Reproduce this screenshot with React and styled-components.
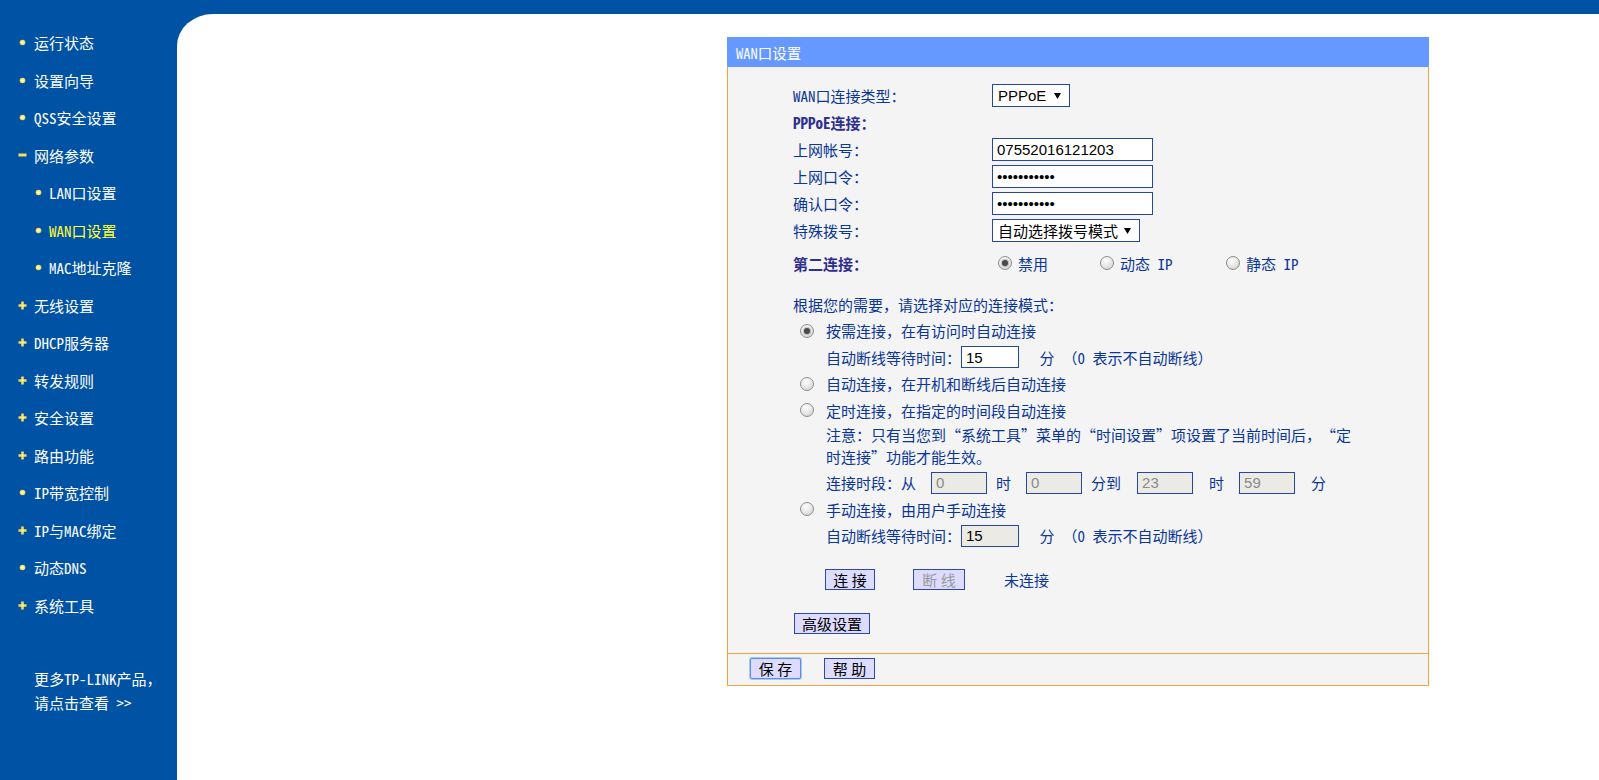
import React from 'react'
import styled, { createGlobalStyle } from 'styled-components'

const GlobalStyle = createGlobalStyle`
html,body{margin:0;padding:0;height:100%;}
body{
  font-family:"Noto Sans Mono CJK SC","Noto Sans CJK SC",sans-serif;
  background:#0052a4;
}
#root{height:100%;}
`

const Page = styled.div`
display:flex;
height:100vh;
background:#0052a4;
overflow:hidden;
`
const Sidebar = styled.div`
width:177px;
flex-shrink:0;
padding-top:24px;
box-sizing:border-box;
`
const MenuItem = styled.div`
display:flex;
align-items:center;
height:37.5px;
padding-left:${p => p.$sub ? '33px' : '17px'};
font-size:15px;
color:${p => p.$active ? '#ffff3a' : '#ffffff'};
white-space:nowrap;
`
const Marker = styled.span`
width:11px;
display:flex;
justify-content:center;
align-items:center;
margin-right:${p => p.$sub ? '5px' : '6px'};
`
const MoreLink = styled.div`
margin:43px 0 0 34px;
color:#fff;
font-size:15px;
line-height:23.5px;
white-space:nowrap;
`

const Main = styled.div`
flex:1;
margin-top:14px;
background:#fff;
border-top-left-radius:36px 32px;
padding:23px 0 0 550px;
`
const Panel = styled.div`
width:702px;
`
const PanelHead = styled.div`
height:30px;
background:#6699ff;
color:#fff;
font-size:14.5px;
display:flex;
align-items:center;
padding-left:9px;
`
const PanelBody = styled.div`
background:#f4f4f4;
border:1px solid #f7a23c;
border-top:none;
`
const Content = styled.div`
padding:15px 0 19px 65px;
color:#0a3697;
font-size:15px;
`
const Row = styled.div`
display:flex;
align-items:center;
white-space:nowrap;
height:${p => p.$h || '26.5px'};
margin-top:${p => p.$mt || '0'};
padding-left:${p => p.$indent || '0'};
`
const Label = styled.span`
width:199px;
flex-shrink:0;
font-weight:${p => p.$strong ? 'bold' : 'normal'};
color:${p => p.$strong ? '#2f2f8f' : 'inherit'};
`
const Note = styled.div`
padding-left:33px;
line-height:22px;
margin-bottom:2px;
white-space:nowrap;
`
const Quote = styled.span`
display:inline-block;
width:1em;
text-align:${p => p.$close ? 'left' : 'right'};
`
const Unit = styled.span`
margin-left:${p => p.$ml || '0'};
`
const Field = styled.input`
box-sizing:border-box;
width:${p => p.$w || '161px'};
height:${p => p.$h || '23px'};
margin:0 0 0 ${p => p.$ml || '0'};
border:1px solid #2846a5;
border-radius:0;
background:${p => p.$gray ? '#ebeae5' : '#fff'};
color:${p => p.$dim ? '#8a8a8a' : '#000'};
font:15px "Liberation Sans",Arial,sans-serif;
padding:0 4px;
outline:none;
`
const SelectBox = styled.div`
box-sizing:border-box;
display:inline-flex;
align-items:center;
height:23px;
padding:0 8px 0 5px;
border:1px solid #2846a5;
background:#fff;
color:#000;
font:${p => p.$cjk ? '15px "Noto Sans CJK SC",sans-serif' : '15px "Liberation Sans",Arial,sans-serif'};
`
const Arrow = styled.svg`
margin-left:${p => p.$gap || '8px'};
`
const RadioOpt = styled.span`
display:inline-flex;
align-items:center;
width:${p => p.$w || 'auto'};
`
const RadioMark = styled.span`
box-sizing:border-box;
width:14px;
height:14px;
border-radius:50%;
border:1px solid #8e8e8e;
background:radial-gradient(circle at 40% 30%, #ffffff 0%, #ececec 40%, #cbcbcb 100%);
display:inline-flex;
align-items:center;
justify-content:center;
flex-shrink:0;
margin:${p => p.$m || '0 6px 0 0'};
&::after{
  content:'';
  width:6px;
  height:6px;
  border-radius:50%;
  background:#4a4a4a;
  box-shadow:0 0 0 1px rgba(100,100,100,0.35);
  display:${p => p.$on ? 'block' : 'none'};
}
`
const Btn = styled.button`
box-sizing:border-box;
width:${p => p.$w || '50px'};
height:21px;
margin-left:${p => p.$ml || '0'};
padding:0;
border:1px solid #2a48b0;
border-radius:0;
background:#dddcff;
color:${p => p.$off ? '#9a9a9a' : '#000'};
font:15px "Noto Sans CJK SC",sans-serif;
line-height:19px;
${p => p.$focus && 'border-color:#5b8fe6;box-shadow:0 0 0 1px #a9c8f4;border-radius:2px;'}
`
const ButtonRow = styled.div`
display:flex;
align-items:center;
margin-top:${p => p.$mt || '0'};
padding-left:${p => p.$indent || '0'};
height:21px;
`
const Status = styled.span`
margin-left:39px;
`
const Footer = styled.div`
border-top:1px solid #f7a23c;
height:32px;
padding:4px 0 0 22px;
box-sizing:border-box;
display:flex;
align-items:flex-start;
`

const Dot = () => (
  <svg width="7" height="7" viewBox="0 0 7 7">
    <circle cx="3.5" cy="3.5" r="2.8" fill="#f5df5a" />
    <circle cx="3.5" cy="3.5" r="1.3" fill="#fffbe2" />
  </svg>
)
const Plus = () => (
  <svg width="9" height="9" viewBox="0 0 9 9">
    <path d="M3.2 0.5h2.6v2.7h2.7v2.6H5.8v2.7H3.2V5.8H0.5V3.2h2.7z" fill="#f5df5a" />
    <rect x="3.8" y="3.8" width="1.4" height="1.4" fill="#fffbe2" />
  </svg>
)
const Minus = () => (
  <svg width="9" height="4" viewBox="0 0 9 4">
    <rect x="0.5" y="0.5" width="8" height="3" fill="#f5df5a" />
  </svg>
)
const Tri = ({ gap }) => (
  <Arrow $gap={gap} width="7" height="6" viewBox="0 0 7 6">
    <polygon points="0,0 7,0 3.5,6" fill="#000" />
  </Arrow>
)

const menu = [
  { t: '运行状态', m: 'dot' },
  { t: '设置向导', m: 'dot' },
  { t: 'QSS安全设置', m: 'dot' },
  { t: '网络参数', m: 'minus' },
  { t: 'LAN口设置', m: 'dot', sub: true },
  { t: 'WAN口设置', m: 'dot', sub: true, active: true },
  { t: 'MAC地址克隆', m: 'dot', sub: true },
  { t: '无线设置', m: 'plus' },
  { t: 'DHCP服务器', m: 'plus' },
  { t: '转发规则', m: 'plus' },
  { t: '安全设置', m: 'plus' },
  { t: '路由功能', m: 'plus' },
  { t: 'IP带宽控制', m: 'dot' },
  { t: 'IP与MAC绑定', m: 'plus' },
  { t: '动态DNS', m: 'dot' },
  { t: '系统工具', m: 'plus' },
]

const markers = { dot: Dot, plus: Plus, minus: Minus }

// fullwidth curly quotes, as the router's SimSun renders them
const Q = ({ children }) => (
  <>
    <Quote>“</Quote>{children}<Quote $close>”</Quote>
  </>
)

const App = () => {
  return (
    <Page>
      <GlobalStyle />
      <Sidebar>
        {menu.map(item => {
          const M = markers[item.m]
          return (
            <MenuItem key={item.t} $sub={item.sub} $active={item.active}>
              <Marker $sub={item.sub}><M /></Marker>
              {item.t}
            </MenuItem>
          )
        })}
        <MoreLink>
          更多TP-LINK产品，<br />
          请点击查看 &gt;&gt;
        </MoreLink>
      </Sidebar>

      <Main>
        <Panel>
          <PanelHead>WAN口设置</PanelHead>
          <PanelBody>
            <Content>
              <Row $h="27px">
                <Label>WAN口连接类型：</Label>
                <SelectBox>PPPoE<Tri /></SelectBox>
              </Row>
              <Row $h="27px"><Label $strong>PPPoE连接：</Label></Row>
              <Row $h="27px">
                <Label>上网帐号：</Label>
                <Field defaultValue="07552016121203" />
              </Row>
              <Row $h="27px">
                <Label>上网口令：</Label>
                <Field type="password" defaultValue="12345678901" />
              </Row>
              <Row $h="27px">
                <Label>确认口令：</Label>
                <Field type="password" defaultValue="12345678901" />
              </Row>
              <Row $h="27px">
                <Label>特殊拨号：</Label>
                <SelectBox $cjk>自动选择拨号模式<Tri gap="6px" /></SelectBox>
              </Row>
              <Row $h="38px">
                <Label $strong>第二连接：</Label>
                <RadioOpt $w="102px" style={{ marginLeft: 6 }}><RadioMark $on />禁用</RadioOpt>
                <RadioOpt $w="126px"><RadioMark />动态 IP</RadioOpt>
                <RadioOpt><RadioMark />静态 IP</RadioOpt>
              </Row>

              <Row $mt="9px">根据您的需要，请选择对应的连接模式：</Row>
              <Row $indent="7px"><RadioMark $on $m="0 12px 0 0" />按需连接，在有访问时自动连接</Row>
              <Row $indent="33px">
                自动断线等待时间：
                <Field $w="58px" $h="22px" defaultValue="15" />
                <Unit $ml="20.5px">分</Unit>
                <Unit $ml="8px">（0 表示不自动断线）</Unit>
              </Row>
              <Row $indent="7px"><RadioMark $m="0 12px 0 0" />自动连接，在开机和断线后自动连接</Row>
              <Row $indent="7px"><RadioMark $m="0 12px 0 0" />定时连接，在指定的时间段自动连接</Row>
              <Note>
                注意：只有当您到<Q>系统工具</Q>菜单的<Q>时间设置</Q>项设置了当前时间后，<Quote>“</Quote>定<br />
                时连接<Quote $close>”</Quote>功能才能生效。
              </Note>
              <Row $indent="33px">
                连接时段：从
                <Field $w="56px" $h="22px" $ml="15px" $gray $dim readOnly defaultValue="0" />
                <Unit $ml="9px">时</Unit>
                <Field $w="56px" $h="22px" $ml="15px" $gray $dim readOnly defaultValue="0" />
                <Unit $ml="9px">分到</Unit>
                <Field $w="56px" $h="22px" $ml="16px" $gray $dim readOnly defaultValue="23" />
                <Unit $ml="16px">时</Unit>
                <Field $w="56px" $h="22px" $ml="15px" $gray $dim readOnly defaultValue="59" />
                <Unit $ml="16px">分</Unit>
              </Row>
              <Row $indent="7px"><RadioMark $m="0 12px 0 0" />手动连接，由用户手动连接</Row>
              <Row $indent="33px">
                自动断线等待时间：
                <Field $w="58px" $h="22px" $gray readOnly defaultValue="15" />
                <Unit $ml="20.5px">分</Unit>
                <Unit $ml="8px">（0 表示不自动断线）</Unit>
              </Row>

              <ButtonRow $mt="20px" $indent="32px">
                <Btn>连 接</Btn>
                <Btn $w="52px" $ml="38px" $off>断 线</Btn>
                <Status>未连接</Status>
              </ButtonRow>
              <ButtonRow $mt="23px" $indent="1px">
                <Btn $w="76px">高级设置</Btn>
              </ButtonRow>
            </Content>
            <Footer>
              <Btn $w="51px" $focus>保 存</Btn>
              <Btn $w="51px" $ml="23px">帮 助</Btn>
            </Footer>
          </PanelBody>
        </Panel>
      </Main>
    </Page>
  )
}

export default App
